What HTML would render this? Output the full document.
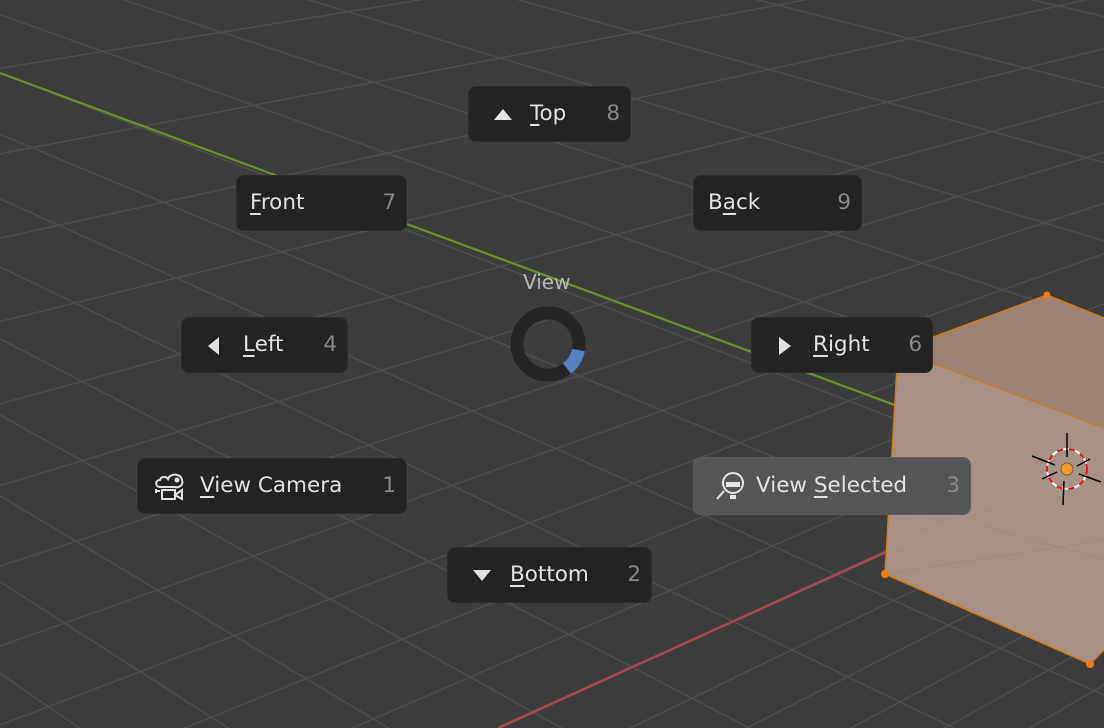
<!DOCTYPE html>
<html><head><meta charset="utf-8"><style>
html,body{margin:0;padding:0;width:1104px;height:728px;overflow:hidden;background:#3d3d3d}
#v{position:absolute;left:0;top:0;overflow:hidden}
.b{position:absolute;height:56px;background:#232323;border:1px solid #2c2c2c;border-radius:8px;box-sizing:border-box;font-family:"DejaVu Sans","Liberation Sans",sans-serif;font-size:21.5px;color:#e2e2e2;line-height:54px;white-space:nowrap}
.b .t{position:absolute;top:0}
.b .k{position:absolute;top:0;right:10px;color:#8a8a8a}
.u{text-decoration:underline;text-underline-offset:4px;text-decoration-thickness:2px}
.b svg{position:absolute}
.lbl{position:absolute;font-family:"DejaVu Sans","Liberation Sans",sans-serif;font-size:20px;color:#b8b8b8;left:523px;top:270px}
</style></head><body>
<svg id="v" width="1104" height="728" xmlns="http://www.w3.org/2000/svg">
<g id="grid" stroke="#4f4f4f" stroke-width="1.6"></g>
<line x1="0" y1="73" x2="900" y2="407" stroke="#6b922a" stroke-width="2.2"/>
<line x1="498" y1="728" x2="992" y2="504" stroke="#a84a50" stroke-width="2.5"/>
<polygon points="1047,295 898,350 1104,428 1104,318" fill="#a08678" opacity="0.95"/>
<polygon points="898,350 885,574 1090,664 1104,650 1104,428" fill="#ad968a" opacity="0.95"/>
<polyline points="1104,318 1047,295 898,350 885,574 1090,664 1104,650" fill="none" stroke="#d07d1a" stroke-width="1.5"/>
<line x1="898" y1="350" x2="1104" y2="428" stroke="#c07a30" stroke-width="1.5"/>
<line x1="885" y1="574" x2="1104" y2="540" stroke="#a08a80" stroke-width="1"/>
<line x1="980" y1="525" x2="1104" y2="560" stroke="#a08a80" stroke-width="1"/>
<circle cx="1047" cy="295" r="3.5" fill="#f07d10"/>
<circle cx="885" cy="574" r="4" fill="#f07d10"/>
<circle cx="1090" cy="664" r="4" fill="#f07d10"/>
<g transform="translate(1067,469)">
<circle r="20" fill="none" stroke="#fff" stroke-width="2"/>
<circle r="20" fill="none" stroke="#e01010" stroke-width="2" stroke-dasharray="6 6"/>
<line x1="0" y1="-36" x2="0" y2="-12" stroke="#000" stroke-width="1.5"/>
<line x1="-3" y1="12" x2="-4" y2="36" stroke="#000" stroke-width="1.5"/>
<line x1="-35" y1="-13" x2="-12" y2="-4" stroke="#000" stroke-width="1.5"/>
<line x1="12" y1="5" x2="34" y2="13" stroke="#000" stroke-width="1.5"/>
<line x1="-25" y1="10" x2="-10" y2="3" stroke="#000" stroke-width="1.5"/>
<line x1="10" y1="-3" x2="23" y2="-10" stroke="#000" stroke-width="1.5"/>
<circle r="6" fill="#f09a30" stroke="#7a5a30" stroke-width="1"/>
</g>
<circle cx="548" cy="344" r="31" fill="none" stroke="#242424" stroke-width="13"/>
<path d="M 578.5 350 A 31 31 0 0 1 567 368.5" fill="none" stroke="#5680c2" stroke-width="13"/>
</svg>
<script>
(function(){var g=document.getElementById('grid'),s='';
function L(vx,vy,a){var dx=Math.cos(a),dy=Math.sin(a);s+='<line x1="'+vx+'" y1="'+vy+'" x2="'+(vx+dx*6000)+'" y2="'+(vy+dy*6000)+'"/>';}
var a0=Math.atan2(773,2000);for(var i=-20;i<22;i++){L(-2000,-700,a0+i*0.026*(1+i*0.015));}
var b0=Math.atan2(1148,-2500);for(var j=-20;j<28;j++){L(3000,-420,b0+j*0.021*(1+j*0.015));}
g.innerHTML=s;})();
</script>
<div class="lbl">View</div>

<div class="b" style="left:468px;top:86px;width:163px"><svg style="left:25px;top:22px" width="18" height="12"><polygon points="9,0 18,11 0,11" fill="#e2e2e2"/></svg><span class="t" style="left:61px"><span class="u">T</span>op</span><span class="k">8</span></div>
<div class="b" style="left:236px;top:175px;width:171px"><span class="t" style="left:13px"><span class="u">F</span>ront</span><span class="k">7</span></div>
<div class="b" style="left:693px;top:175px;width:169px"><span class="t" style="left:14px">B<span class="u">a</span>ck</span><span class="k">9</span></div>
<div class="b" style="left:181px;top:317px;width:167px"><svg style="left:26px;top:19px" width="12" height="18"><polygon points="0,9 11,0 11,18" fill="#e2e2e2"/></svg><span class="t" style="left:61px"><span class="u">L</span>eft</span><span class="k">4</span></div>
<div class="b" style="left:751px;top:317px;width:182px"><svg style="left:27px;top:19px" width="12" height="18"><polygon points="0,0 12,9 0,18" fill="#e2e2e2"/></svg><span class="t" style="left:61px"><span class="u">R</span>ight</span><span class="k">6</span></div>
<div class="b" style="left:137px;top:458px;width:270px"><svg style="left:16px;top:11px" width="34" height="32" fill="none" stroke="#e2e2e2" stroke-width="2"><path d="M6 17 C1 17 1 10 6 10 C7 6 12 6 14 9 C16 3 27 3 28 10 C30 16 24 18 21 17 Z"/><circle cx="23" cy="10" r="1.5" fill="#e2e2e2"/><path d="M2 19 v4 M2 21 h4"/><rect x="8" y="20" width="13" height="9"/><path d="M21 25 l7 -5 v9 z"/></svg><span class="t" style="left:62px"><span class="u">V</span>iew Camera</span><span class="k">1</span></div>
<div class="b" style="left:693px;top:457px;width:278px;height:58px;background:#555;border-color:#5e5e5e;line-height:56px"><svg style="left:20px;top:13px" width="32" height="32" fill="none" stroke="#e6e6e6" stroke-width="2"><circle cx="19" cy="12" r="10"/><path d="M10 20 L3 28"/><path d="M12 11 h14 v5 h-14 z" fill="#e6e6e6" stroke="none"/><rect x="16" y="24" width="6" height="4" fill="#e6e6e6" stroke="none"/></svg><span class="t" style="left:62px">View <span class="u">S</span>elected</span><span class="k">3</span></div>
<div class="b" style="left:447px;top:547px;width:205px"><svg style="left:25px;top:22px" width="18" height="12"><polygon points="0,0 18,0 9,11" fill="#e2e2e2"/></svg><span class="t" style="left:62px"><span class="u">B</span>ottom</span><span class="k">2</span></div>
</body></html>
